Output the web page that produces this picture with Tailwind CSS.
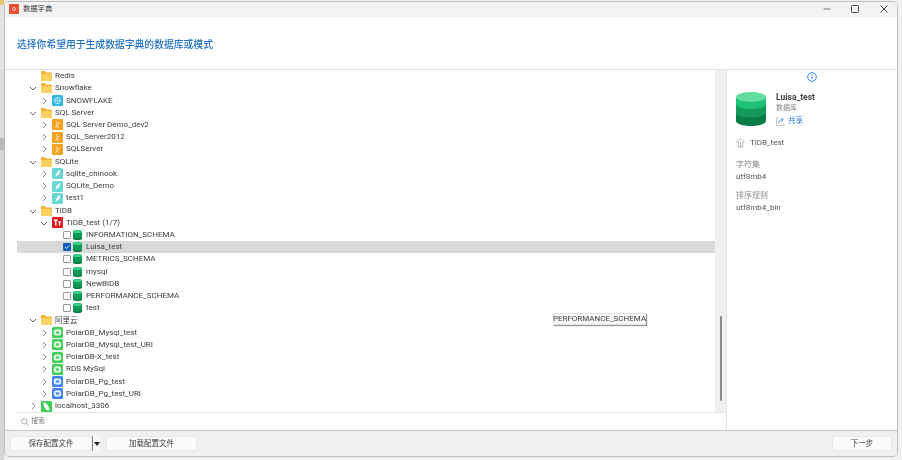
<!DOCTYPE html>
<html lang="zh-CN">
<head>
  <meta charset="UTF-8">
  <title>数据字典</title>
  <script src="https://cdn.jsdelivr.net/npm/@tailwindcss/browser@4"></script>
</head>
<body class="bg-[#f1f1f1] font-['Roboto','Noto_Sans_CJK_SC',sans-serif] text-[8px] leading-none text-[#3d3d3d] overflow-hidden">
  <!-- icon sprites -->
  <svg class="hidden">
    <symbol id="right" viewBox="0 0 8 8"><path d="M3 1l3 3-3 3" fill="none" stroke="#888" stroke-width="1"/></symbol>
    <symbol id="down" viewBox="0 0 8 8"><path d="M1 3l3 3 3-3" fill="none" stroke="#666" stroke-width="1"/></symbol>
    <symbol id="folder" viewBox="0 0 11 10"><path d="M0 1.200C0 .5.5 0 1.200 0h2.600l1.200 1.400h4.800c.7 0 1.200.5 1.200 1.200V9c0 .6-.5 1-1.200 1H1.200C.5 10 0 9.600 0 9z" fill="#f5b335"/><path d="M0 3h11v6c0 .6-.5 1-1.200 1H1.200C.5 10 0 9.600 0 9z" fill="#fdd15f"/></symbol>
    <symbol id="snow" viewBox="0 0 11 11"><rect width="11" height="11" rx="1.500" fill="#2fb5e6"/><circle cx="5.500" cy="5.500" r="3" fill="none" stroke="#d5f2fb" stroke-width="1"/><path d="M2 5.500h7M5.500 2v7" stroke="#d5f2fb" stroke-width=".6"/></symbol>
    <symbol id="mssql" viewBox="0 0 11 11"><rect width="11" height="11" rx="1" fill="#f7a11f"/><path d="M4 2c1 1.500 1.500 2.500 1 4l-1.500 3M5 5l3-1M5 6l1.500 3" fill="none" stroke="#fde3b3" stroke-width="1"/></symbol>
    <symbol id="sqlite" viewBox="0 0 11 11"><rect width="11" height="11" rx="1.500" fill="#67d8d3"/><path d="M3.500 9c.2-3 1.800-6 4.500-7 .4 2.500-.8 5-3.200 5.800z" fill="#fff"/></symbol>
    <symbol id="tidb" viewBox="0 0 11 11"><rect width="11" height="11" rx="1" fill="#e2161d"/><path d="M1.800 2.600h3.900v1.500H4.500v4.300H3V4.100H1.800zM6.400 4.200h2.800v1.400h-1v2.800H6.900V5.600h-.5z" fill="#fff"/></symbol>
    <symbol id="db" viewBox="0 0 9 10"><path d="M0 1.500C0 .6 2 0 4.500 0S9 .6 9 1.500v7C9 9.400 7 10 4.500 10S0 9.400 0 8.500z" fill="#0b9a56"/><ellipse cx="4.500" cy="1.500" rx="4.500" ry="1.500" fill="#35cf86"/><path d="M0 7c1 1 2.500 1.200 4.500 1.200S8 8 9 7v1.500C9 9.400 7 10 4.500 10S0 9.400 0 8.500z" fill="#077a43"/></symbol>
    <symbol id="polarg" viewBox="0 0 11 11"><rect width="11" height="11" rx="1.500" fill="#3fd058"/><rect x="2.300" y="3" width="6.400" height="5" rx="1.500" fill="#d4f5da" stroke="#fff" stroke-width="1"/><rect x="4" y="4.500" width="3" height="2" fill="#3fd058"/></symbol>
    <symbol id="polarb" viewBox="0 0 11 11"><rect width="11" height="11" rx="1.500" fill="#3f83f5"/><rect x="2.300" y="3" width="6.400" height="5" rx="1.500" fill="#d5e4fd" stroke="#fff" stroke-width="1"/><rect x="4" y="4.500" width="3" height="2" fill="#3f83f5"/></symbol>
    <symbol id="leaf" viewBox="0 0 13 13"><rect width="13" height="13" rx="1" fill="#3fd058"/><path d="M3 1.500c3 .5 6 3.500 7 8.500l-1.500 1.500C5 10.500 2.500 6 3 1.500z" fill="#fff"/></symbol>
  </svg>

  <div class="flex h-[460px] w-[902px] blur-[0.35px]">
    <!-- whatever is behind the window on the left -->
    <div class="w-[4px] h-[460px] flex flex-col bg-[#d6d6d6]">
      <div class="h-[5px] bg-[#e8c66a]"></div>
      <div class="h-[65px] bg-[#e4e4e4]"></div>
      <div class="h-[68px] bg-[#dcdcdc]"></div>
      <div class="h-[12px] bg-[#b9b9b9]"></div>
    </div>

    <!-- window -->
    <div class="relative mt-[1px] w-[894px] h-[456px] flex flex-col bg-white border border-[#bdbdbd] rounded-[5px] overflow-hidden">
      <div class="h-[16px] shrink-0 flex items-center bg-[#f3f3f3] pb-[3px]">
        <div class="ml-[4px] w-[10px] h-[10px] rounded-[1px] bg-[#e8512f] flex items-center justify-center">
          <div class="w-[4px] h-[4px] rounded-full border border-[#f9c9b8]"></div>
        </div>
        <span class="ml-[4px] text-[7.300px] text-[#333]">数据字典</span>
        <div class="ml-auto flex items-center">
          <svg class="w-[8px] h-[8px] mr-[20px]" viewBox="0 0 8 8"><path d="M.5 4h7" stroke="#777"/></svg>
          <svg class="w-[8px] h-[8px] mr-[21px]" viewBox="0 0 8 8"><rect x=".5" y=".5" width="7" height="7" rx="1" fill="none" stroke="#444"/></svg>
          <svg class="w-[8px] h-[8px] mr-[9px]" viewBox="0 0 8 8"><path d="M.5.5l7 7M7.500.5l-7 7" stroke="#444"/></svg>
        </div>
      </div>

      <div class="h-[52px] shrink-0 flex items-center border-b border-[#e0e0e0] pl-[12px] pt-[3px]">
        <span class="text-[9.800px] font-medium text-[#1f72c4]">选择你希望用于生成数据字典的数据库或模式</span>
      </div>

      <div class="flex-1 flex min-h-0">
        <div class="w-[721px] flex flex-col shrink-0">
          <div class="flex-1 flex min-h-0">
            <div class="flex-1 ml-[12px] min-w-0">
              <div class="h-[12.220px] flex items-center pl-[12px]"><span class="w-[8px]"></span><svg class="ml-[4px] w-[11px] h-[10px]"><use href="#folder"/></svg><span class="ml-[3px]">Redis</span></div>
              <div class="h-[12.220px] flex items-center pl-[12px]"><svg class="w-[8px] h-[8px]"><use href="#down"/></svg><svg class="ml-[4px] w-[11px] h-[10px]"><use href="#folder"/></svg><span class="ml-[3px]">Snowflake</span></div>
              <div class="h-[12.220px] flex items-center pl-[23px]"><svg class="w-[8px] h-[8px]"><use href="#right"/></svg><svg class="ml-[4px] w-[11px] h-[11px]"><use href="#snow"/></svg><span class="ml-[3px]">SNOWFLAKE</span></div>
              <div class="h-[12.220px] flex items-center pl-[12px]"><svg class="w-[8px] h-[8px]"><use href="#down"/></svg><svg class="ml-[4px] w-[11px] h-[10px]"><use href="#folder"/></svg><span class="ml-[3px]">SQL Server</span></div>
              <div class="h-[12.220px] flex items-center pl-[23px]"><svg class="w-[8px] h-[8px]"><use href="#right"/></svg><svg class="ml-[4px] w-[11px] h-[11px]"><use href="#mssql"/></svg><span class="ml-[3px]">SQL Server Demo_dev2</span></div>
              <div class="h-[12.220px] flex items-center pl-[23px]"><svg class="w-[8px] h-[8px]"><use href="#right"/></svg><svg class="ml-[4px] w-[11px] h-[11px]"><use href="#mssql"/></svg><span class="ml-[3px]">SQL_Server2012</span></div>
              <div class="h-[12.220px] flex items-center pl-[23px]"><svg class="w-[8px] h-[8px]"><use href="#right"/></svg><svg class="ml-[4px] w-[11px] h-[11px]"><use href="#mssql"/></svg><span class="ml-[3px]">SQLServer</span></div>
              <div class="h-[12.220px] flex items-center pl-[12px]"><svg class="w-[8px] h-[8px]"><use href="#down"/></svg><svg class="ml-[4px] w-[11px] h-[10px]"><use href="#folder"/></svg><span class="ml-[3px]">SQLite</span></div>
              <div class="h-[12.220px] flex items-center pl-[23px]"><svg class="w-[8px] h-[8px]"><use href="#right"/></svg><svg class="ml-[4px] w-[11px] h-[11px]"><use href="#sqlite"/></svg><span class="ml-[3px]">sqlite_chinook</span></div>
              <div class="h-[12.220px] flex items-center pl-[23px]"><svg class="w-[8px] h-[8px]"><use href="#right"/></svg><svg class="ml-[4px] w-[11px] h-[11px]"><use href="#sqlite"/></svg><span class="ml-[3px]">SQLite_Demo</span></div>
              <div class="h-[12.220px] flex items-center pl-[23px]"><svg class="w-[8px] h-[8px]"><use href="#right"/></svg><svg class="ml-[4px] w-[11px] h-[11px]"><use href="#sqlite"/></svg><span class="ml-[3px]">test1</span></div>
              <div class="h-[12.220px] flex items-center pl-[12px]"><svg class="w-[8px] h-[8px]"><use href="#down"/></svg><svg class="ml-[4px] w-[11px] h-[10px]"><use href="#folder"/></svg><span class="ml-[3px]">TiDB</span></div>
              <div class="h-[12.220px] flex items-center pl-[23px]"><svg class="w-[8px] h-[8px]"><use href="#down"/></svg><svg class="ml-[4px] w-[11px] h-[11px]"><use href="#tidb"/></svg><span class="ml-[3px]">TiDB_test (1/7)</span></div>
              <div class="h-[12.220px] flex items-center pl-[46px]"><span class="w-[8px] h-[8px] rounded-[1px] border border-[#9a9a9a] bg-[#fafafa]"></span><svg class="ml-[2px] w-[9px] h-[10px]"><use href="#db"/></svg><span class="ml-[4px]">INFORMATION_SCHEMA</span></div>
              <div class="h-[12.220px] flex items-center pl-[46px] bg-[#d9d9d9]"><span class="w-[8px] h-[8px] rounded-[1px] bg-[#0a5fb8] flex items-center justify-center"><svg class="w-[6px] h-[6px]" viewBox="0 0 6 6"><path d="M1 3l1.500 1.500L5 1.500" fill="none" stroke="#fff" stroke-width=".8"/></svg></span><svg class="ml-[2px] w-[9px] h-[10px]"><use href="#db"/></svg><span class="ml-[4px]">Luisa_test</span></div>
              <div class="h-[12.220px] flex items-center pl-[46px]"><span class="w-[8px] h-[8px] rounded-[1px] border border-[#9a9a9a] bg-[#fafafa]"></span><svg class="ml-[2px] w-[9px] h-[10px]"><use href="#db"/></svg><span class="ml-[4px]">METRICS_SCHEMA</span></div>
              <div class="h-[12.220px] flex items-center pl-[46px]"><span class="w-[8px] h-[8px] rounded-[1px] border border-[#9a9a9a] bg-[#fafafa]"></span><svg class="ml-[2px] w-[9px] h-[10px]"><use href="#db"/></svg><span class="ml-[4px]">mysql</span></div>
              <div class="h-[12.220px] flex items-center pl-[46px]"><span class="w-[8px] h-[8px] rounded-[1px] border border-[#9a9a9a] bg-[#fafafa]"></span><svg class="ml-[2px] w-[9px] h-[10px]"><use href="#db"/></svg><span class="ml-[4px]">NewBiDB</span></div>
              <div class="h-[12.220px] flex items-center pl-[46px]"><span class="w-[8px] h-[8px] rounded-[1px] border border-[#9a9a9a] bg-[#fafafa]"></span><svg class="ml-[2px] w-[9px] h-[10px]"><use href="#db"/></svg><span class="ml-[4px]">PERFORMANCE_SCHEMA</span></div>
              <div class="h-[12.220px] flex items-center pl-[46px]"><span class="w-[8px] h-[8px] rounded-[1px] border border-[#9a9a9a] bg-[#fafafa]"></span><svg class="ml-[2px] w-[9px] h-[10px]"><use href="#db"/></svg><span class="ml-[4px]">test</span></div>
              <div class="h-[12.220px] flex items-center pl-[12px]"><svg class="w-[8px] h-[8px]"><use href="#down"/></svg><svg class="ml-[4px] w-[11px] h-[10px]"><use href="#folder"/></svg><span class="ml-[3px] text-[7.500px]">阿里云</span></div>
              <div class="h-[12.220px] flex items-center pl-[23px]"><svg class="w-[8px] h-[8px]"><use href="#right"/></svg><svg class="ml-[4px] w-[11px] h-[11px]"><use href="#polarg"/></svg><span class="ml-[3px]">PolarDB_Mysql_test</span></div>
              <div class="h-[12.220px] flex items-center pl-[23px]"><svg class="w-[8px] h-[8px]"><use href="#right"/></svg><svg class="ml-[4px] w-[11px] h-[11px]"><use href="#polarg"/></svg><span class="ml-[3px]">PolarDB_Mysql_test_URI</span></div>
              <div class="h-[12.220px] flex items-center pl-[23px]"><svg class="w-[8px] h-[8px]"><use href="#right"/></svg><svg class="ml-[4px] w-[11px] h-[11px]"><use href="#polarg"/></svg><span class="ml-[3px]">PolarDB-X_test</span></div>
              <div class="h-[12.220px] flex items-center pl-[23px]"><svg class="w-[8px] h-[8px]"><use href="#right"/></svg><svg class="ml-[4px] w-[11px] h-[11px]"><use href="#polarg"/></svg><span class="ml-[3px]">RDS MySql</span></div>
              <div class="h-[12.220px] flex items-center pl-[23px]"><svg class="w-[8px] h-[8px]"><use href="#right"/></svg><svg class="ml-[4px] w-[11px] h-[11px]"><use href="#polarb"/></svg><span class="ml-[3px]">PolarDB_Pg_test</span></div>
              <div class="h-[12.220px] flex items-center pl-[23px]"><svg class="w-[8px] h-[8px]"><use href="#right"/></svg><svg class="ml-[4px] w-[11px] h-[11px]"><use href="#polarb"/></svg><span class="ml-[3px]">PolarDB_Pg_test_URI</span></div>
              <div class="h-[12.220px] flex items-center pl-[12px]"><svg class="w-[8px] h-[8px]"><use href="#right"/></svg><svg class="ml-[4px] w-[11px] h-[11px]"><use href="#leaf"/></svg><span class="ml-[3px]">localhost_3306</span></div>
            </div>
            <!-- scrollbar -->
            <div class="w-[11px] shrink-0 bg-[#f0f0f0] pt-[246px] flex justify-center">
              <div class="w-[2px] h-[85px] rounded-full bg-[#8a8a8a]"></div>
            </div>
          </div>
          <div class="h-[18px] shrink-0 ml-[12px] border-t border-[#e6e6e6] flex items-center pl-[4px] text-[#777] text-[7px]">
            <svg class="w-[8px] h-[8px]" viewBox="0 0 8 8"><circle cx="3.300" cy="3.300" r="2.700" fill="none" stroke="#999" stroke-width=".8"/><path d="M5.300 5.300L7.600 7.600" stroke="#999" stroke-width=".8"/></svg>
            <span class="ml-[2px]">搜索</span>
          </div>
        </div>

        <!-- details -->
        <div class="flex-1 border-l border-[#e6e6e6] pl-[9px] text-[#555]">
          <div class="h-[14px] flex items-center pl-[71px]">
            <svg class="w-[10px] h-[10px]" viewBox="0 0 10 10"><circle cx="5" cy="5" r="4.300" fill="none" stroke="#2f80ed" stroke-width="1"/><path d="M5 4.200v3M5 2.500v1" stroke="#2f80ed" stroke-width="1"/></svg>
          </div>
          <div class="mt-[8px] flex">
            <svg class="w-[30px] h-[34px]" viewBox="0 0 30 34"><path d="M0 5v24c0 2.800 6.700 5 15 5s15-2.200 15-5V5z" fill="#0a7d46"/><path d="M0 5v15.500c0 2.800 6.700 5 15 5s15-2.200 15-5V5z" fill="#149a5a"/><path d="M0 5v7c0 2.800 6.700 5 15 5s15-2.200 15-5V5z" fill="#1fc275"/><ellipse cx="15" cy="5" rx="15" ry="5" fill="#63dc9f"/></svg>
            <div class="ml-[10px]">
              <div class="h-[11px] flex items-center font-bold text-[#444] text-[8.500px]">Luisa_test</div>
              <div class="h-[11px] flex items-center text-[#888] text-[7px]">数据库</div>
              <div class="h-[12px] mt-[1px] flex items-center text-[#2f80ed] text-[7.500px]">
                <svg class="w-[9px] h-[9px]" viewBox="0 0 9 9"><path d="M3 1H.5v7.500H8V6" fill="none" stroke="#bbb" stroke-width=".8"/><path d="M2.500 6c0-2 1.500-3.300 4-3.300M5.300 1L7.500 2.700 5.300 4.500" fill="none" stroke="#2f80ed" stroke-width=".8"/></svg>
                <span class="ml-[3px]">共享</span>
              </div>
            </div>
          </div>
          <div class="mt-[10px] h-[12px] flex items-center">
            <svg class="w-[9px] h-[10px]" viewBox="0 0 9 10"><path d="M4.500.5L8.500 4H6.800v5H2.200V4H.5z" fill="none" stroke="#aaa" stroke-width=".8"/><path d="M4.500 3v6" stroke="#aaa" stroke-width=".8"/></svg>
            <span class="ml-[5px]">TiDB_test</span>
          </div>
          <div class="mt-[10px] h-[12px] flex items-center text-[#888] text-[8px]">字符集</div>
          <div class="h-[12px] flex items-center">utf8mb4</div>
          <div class="mt-[7px] h-[12px] flex items-center text-[#888] text-[8px]">排序规则</div>
          <div class="h-[11px] flex items-center">utf8mb4_bin</div>
        </div>
      </div>

      <!-- footer -->
      <div class="h-[26px] shrink-0 bg-[#f0f0f0] border-t border-[#c9c9c9] flex items-center pl-[5px] pr-[5px] text-[7.500px]">
        <button class="w-[82px] h-[15px] bg-[#fbfbfb] border border-[#e8e8e8] rounded-[2px] flex items-center justify-center">保存配置文件</button>
        <button class="w-[8px] h-[15px] bg-[#fbfbfb] border-l border-[#888] flex items-center justify-center">
          <svg class="w-[6px] h-[4px]" viewBox="0 0 6 4"><path d="M0 0h6L3 4z" fill="#222"/></svg>
        </button>
        <button class="ml-[6px] w-[91px] h-[15px] bg-[#fbfbfb] border border-[#e8e8e8] rounded-[2px] flex items-center justify-center">加载配置文件</button>
        <button class="ml-auto w-[60px] h-[15px] bg-[#fbfbfb] border border-[#e8e8e8] rounded-[2px] flex items-center justify-center">下一步</button>
      </div>

      <!-- tooltip -->
      <div class="absolute left-[548px] top-[311px] w-[93px] h-[12px] flex items-center justify-center bg-[#f9f9f9] border border-[#e2e2e2] shadow-[1px_1px_1px_#999] whitespace-nowrap">PERFORMANCE_SCHEMA</div>
    </div>
  </div>
</body>
</html>
